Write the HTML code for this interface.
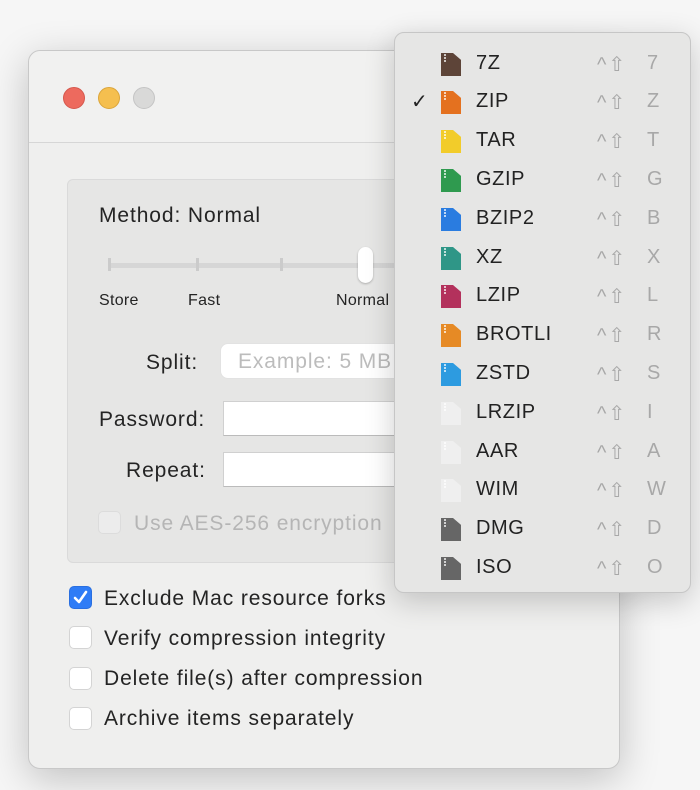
<!DOCTYPE html>
<html><head><meta charset="utf-8"><style>
*{box-sizing:border-box;margin:0;padding:0}
body{width:700px;height:790px;background:#f6f6f6;position:relative;overflow:hidden;font-family:"Liberation Sans",sans-serif;color:#242424}
.win{position:absolute;left:28px;top:50px;width:592px;height:719px;background:#efefee;border:1px solid #c8c8c8;border-radius:12px;box-shadow:0 10px 40px rgba(0,0,0,.22)}
.tb{position:absolute;left:0;top:0;right:0;height:92px;border-bottom:1px solid #d6d6d6;background:#f1f1f0;border-radius:12px 12px 0 0}
.l{position:absolute;top:36px;width:22px;height:22px;border-radius:50%}
.grp{position:absolute;left:38px;top:128px;width:560px;height:384px;background:#e6e6e5;border:1px solid #dadada;border-radius:6px}
.t{position:absolute;font-size:21px;letter-spacing:0.9px;white-space:nowrap}
.s{position:absolute;font-size:16px;letter-spacing:0.3px}
.fld{position:absolute;background:#fff;border:1px solid #d0d0d0;border-bottom-color:#bbb}
.cb{position:absolute;left:40px;width:23px;height:23px;border-radius:5px;background:#fff;border:1px solid #d4d4d4}
.menu{position:absolute;left:394px;top:32px;width:297px;height:561px;background:#e6e6e5;border:1px solid #c6c6c6;border-radius:10px;box-shadow:0 8px 30px rgba(0,0,0,.2)}
.row{position:absolute;left:0;width:100%;height:39px}
.ic{position:absolute;left:46px;top:10px;width:20px;height:23px;clip-path:polygon(0 0,60% 0,100% 30%,100% 100%,0 100%)}
.ic::after{content:"";position:absolute;left:3px;top:1px;width:3px;height:8px;border-left:2px dotted rgba(255,255,255,.7)}
.nm{position:absolute;left:81px;top:9px;font-size:20px;letter-spacing:0.6px;color:#222}
.sc{position:absolute;left:202px;top:9px;font-size:20px;color:#a8a8a8;letter-spacing:2px}
.sc b{font-weight:normal;position:absolute;left:50px}
</style></head><body>
<div class="win">
 <div class="tb">
  <div class="l" style="left:34px;background:#ed6a5e;border:1px solid #d5574c"></div>
  <div class="l" style="left:69px;background:#f5bf4f;border:1px solid #dba53a"></div>
  <div class="l" style="left:104px;background:#d9d9d8;border:1px solid #c4c4c4"></div>
 </div>
 <div class="grp"></div>
 <div class="t" style="left:70px;top:153px">Method: Normal</div>
 <div style="position:absolute;left:80px;top:212px;width:300px;height:5px;background:#d6d6d6;border-radius:3px"></div>
 <div style="position:absolute;left:79px;top:207px;width:3px;height:13px;background:#cbcbcb"></div>
 <div style="position:absolute;left:167px;top:207px;width:3px;height:13px;background:#cbcbcb"></div>
 <div style="position:absolute;left:251px;top:207px;width:3px;height:13px;background:#cbcbcb"></div>
 <div style="position:absolute;left:329px;top:196px;width:15px;height:36px;background:#fff;border-radius:8px;box-shadow:0 1px 2px rgba(0,0,0,.25)"></div>
 <div class="s" style="left:70px;top:241px">Store</div>
 <div class="s" style="left:159px;top:241px">Fast</div>
 <div class="s" style="left:307px;top:241px">Normal</div>
 <div class="t" style="left:117px;top:300px">Split:</div>
 <div class="fld" style="left:191px;top:292px;width:200px;height:36px;border-radius:8px;border-color:#e2e2e2"></div>
 <div class="t" style="left:209px;top:299px;color:#bcbcbc">Example: 5 MB</div>
 <div class="t" style="left:70px;top:357px">Password:</div>
 <div class="fld" style="left:194px;top:350px;width:200px;height:35px"></div>
 <div class="t" style="left:97px;top:408px">Repeat:</div>
 <div class="fld" style="left:194px;top:401px;width:200px;height:35px"></div>
 <div class="cb" style="left:69px;top:460px;background:#ececec;border-color:#dcdcdc"></div>
 <div class="t" style="left:105px;top:461px;color:#b5b5b5">Use AES-256 encryption</div>
 <div class="cb" style="top:535px;background:#2f7cf6;border-color:#2a6fe0"><svg width="21" height="21" viewBox="0 0 21 21" style="position:absolute;left:0;top:0"><path d="M5 11 L9 15 L16 5" stroke="#fff" stroke-width="2.6" fill="none" stroke-linecap="round" stroke-linejoin="round"/></svg></div>
 <div class="t" style="left:75px;top:536px">Exclude Mac resource forks</div>
 <div class="cb" style="top:575px"></div>
 <div class="t" style="left:75px;top:576px">Verify compression integrity</div>
 <div class="cb" style="top:616px"></div>
 <div class="t" style="left:75px;top:616px">Delete file(s) after compression</div>
 <div class="cb" style="top:656px"></div>
 <div class="t" style="left:75px;top:656px">Archive items separately</div>
</div>
<div class="menu">
 <div class="row" style="top:10px"><div class="ic" style="background:#5d4438"></div><div class="nm">7Z</div><div class="sc">^⇧<b>7</b></div></div>
 <div class="row" style="top:48px"><div style="position:absolute;left:16px;top:8px;font-size:20px">✓</div><div class="ic" style="background:#e4711f"></div><div class="nm">ZIP</div><div class="sc">^⇧<b>Z</b></div></div>
 <div class="row" style="top:87px"><div class="ic" style="background:#f2cc2a"></div><div class="nm">TAR</div><div class="sc">^⇧<b>T</b></div></div>
 <div class="row" style="top:126px"><div class="ic" style="background:#2f9a4f"></div><div class="nm">GZIP</div><div class="sc">^⇧<b>G</b></div></div>
 <div class="row" style="top:165px"><div class="ic" style="background:#2a7ce0"></div><div class="nm">BZIP2</div><div class="sc">^⇧<b>B</b></div></div>
 <div class="row" style="top:204px"><div class="ic" style="background:#2f9687"></div><div class="nm">XZ</div><div class="sc">^⇧<b>X</b></div></div>
 <div class="row" style="top:242px"><div class="ic" style="background:#b3315c"></div><div class="nm">LZIP</div><div class="sc">^⇧<b>L</b></div></div>
 <div class="row" style="top:281px"><div class="ic" style="background:#e68a25"></div><div class="nm">BROTLI</div><div class="sc">^⇧<b>R</b></div></div>
 <div class="row" style="top:320px"><div class="ic" style="background:#2d9be0"></div><div class="nm">ZSTD</div><div class="sc">^⇧<b>S</b></div></div>
 <div class="row" style="top:359px"><div class="ic" style="background:#efefef"></div><div class="nm">LRZIP</div><div class="sc">^⇧<b>I</b></div></div>
 <div class="row" style="top:398px"><div class="ic" style="background:#efefef"></div><div class="nm">AAR</div><div class="sc">^⇧<b>A</b></div></div>
 <div class="row" style="top:436px"><div class="ic" style="background:#efefef"></div><div class="nm">WIM</div><div class="sc">^⇧<b>W</b></div></div>
 <div class="row" style="top:475px"><div class="ic" style="background:#666"></div><div class="nm">DMG</div><div class="sc">^⇧<b>D</b></div></div>
 <div class="row" style="top:514px"><div class="ic" style="background:#666"></div><div class="nm">ISO</div><div class="sc">^⇧<b>O</b></div></div>
</div>
</body></html>
